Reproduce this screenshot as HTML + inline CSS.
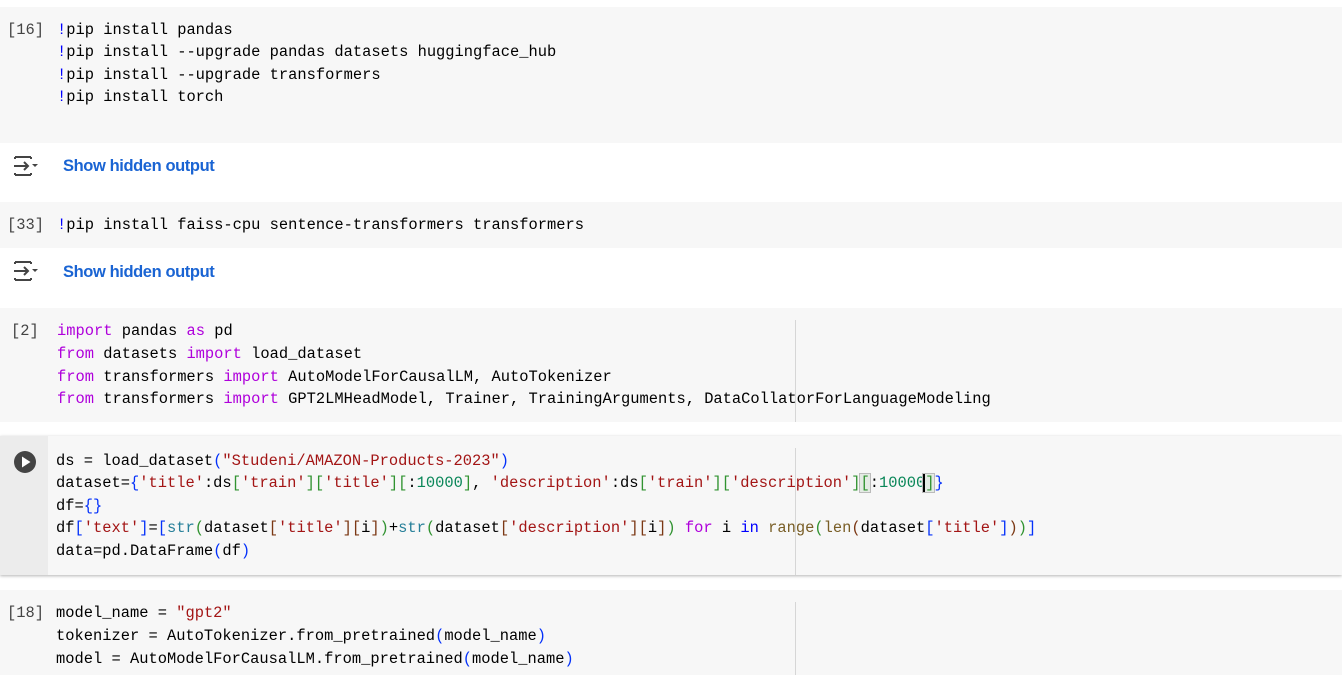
<!DOCTYPE html>
<html><head><meta charset="utf-8"><style>
body{margin:0;width:1342px;height:675px;background:#fff;position:relative;overflow:hidden;font-family:"Liberation Mono",monospace;font-size:15.42px;color:#000}
.cell{position:absolute;left:0;width:1342px;background:#f7f7f7}
.ln{position:absolute;white-space:pre;line-height:22px}
.lab{position:absolute;color:#444;white-space:pre;line-height:22px}
.k{color:#af00db}.b{color:#0000ff}.s{color:#a31515}.n{color:#098658}.f{color:#267f99}.bl{color:#0431fa}.g{color:#319331}.y{color:#7b3814}.e{color:#0000ff}.fn{color:#795e26}
.out{position:absolute;left:63px;font-family:"Liberation Sans",sans-serif;font-size:16.5px;color:#1a64d3;font-weight:bold;letter-spacing:-0.4px}
.ruler{position:absolute;left:795px;width:1px;background:#d6d6d6}
</style></head><body>
<div class="cell" style="top:7px;height:136px"></div>
<div class="lab" style="left:7px;top:19px">[16]</div>
<div class="ln" style="left:57px;top:19px"><span class="e">!</span>pip install pandas</div>
<div class="ln" style="left:57px;top:41px"><span class="e">!</span>pip install --upgrade pandas datasets huggingface_hub</div>
<div class="ln" style="left:57px;top:64px"><span class="e">!</span>pip install --upgrade transformers</div>
<div class="ln" style="left:57px;top:86px"><span class="e">!</span>pip install torch</div>

<svg style="position:absolute;left:13px;top:155px" width="26" height="22" viewBox="0 0 26 22" fill="none" stroke="#444" stroke-width="2"><path d="M2 2h16M2 20h16M2 2v2M2 18v2M18 2v2M18 18v2M1 11h14M11 7l4 4-4 4"/><path d="M19 9h6l-3 3z" fill="#444" stroke="none"/></svg>
<div class="out" style="top:157px">Show hidden output</div>

<div class="cell" style="top:202px;height:46px"></div>
<div class="lab" style="left:7px;top:214px">[33]</div>
<div class="ln" style="left:57px;top:214px"><span class="e">!</span>pip install faiss-cpu sentence-transformers transformers</div>
<svg style="position:absolute;left:13px;top:260px" width="26" height="22" viewBox="0 0 26 22" fill="none" stroke="#444" stroke-width="2"><path d="M2 2h16M2 20h16M2 2v2M2 18v2M18 2v2M18 18v2M1 11h14M11 7l4 4-4 4"/><path d="M19 9h6l-3 3z" fill="#444" stroke="none"/></svg>
<div class="out" style="top:263px">Show hidden output</div>

<div class="cell" style="top:308px;height:114px"></div>
<div class="ruler" style="top:320px;height:102px"></div>
<div class="lab" style="left:11px;top:320px">[2]</div>
<div class="ln" style="left:57px;top:320px"><span class="k">import</span> pandas <span class="k">as</span> pd</div>
<div class="ln" style="left:57px;top:343px"><span class="k">from</span> datasets <span class="k">import</span> load_dataset</div>
<div class="ln" style="left:57px;top:366px"><span class="k">from</span> transformers <span class="k">import</span> AutoModelForCausalLM, AutoTokenizer</div>
<div class="ln" style="left:57px;top:388px"><span class="k">from</span> transformers <span class="k">import</span> GPT2LMHeadModel, Trainer, TrainingArguments, DataCollatorForLanguageModeling</div>

<div class="cell" style="top:436px;height:139px;box-shadow:0 1px 3px rgba(0,0,0,.3)"></div>
<div style="position:absolute;left:0;top:436px;width:48px;height:139px;background:#ececec"></div>
<div class="ruler" style="top:448px;height:127px"></div>
<svg style="position:absolute;left:13px;top:450px" width="24" height="24"><circle cx="12" cy="12" r="11" fill="#444"/><path d="M9 6.5v11l8.5-5.5z" fill="#fff"/></svg>
<div class="ln" style="left:56px;top:450px">ds = load_dataset<span class="bl">(</span><span class="s">"Studeni/AMAZON-Products-2023"</span><span class="bl">)</span></div>
<div class="ln" style="left:56px;top:472px">dataset=<span class="bl">{</span><span class="s">'title'</span>:ds<span class="g">[</span><span class="s">'train'</span><span class="g">][</span><span class="s">'title'</span><span class="g">][</span>:<span class="n">10000</span><span class="g">]</span>, <span class="s">'description'</span>:ds<span class="g">[</span><span class="s">'train'</span><span class="g">][</span><span class="s">'description'</span><span class="g">]</span><span class="g" style="outline:1px solid #bbb;background:#e4ebe4">[</span>:<span class="n">10000</span><span class="g" style="outline:1px solid #bbb;background:#e4ebe4;border-left:2px solid #000;margin-left:-2px">]</span><span class="bl">}</span></div>
<div class="ln" style="left:56px;top:495px">df=<span class="bl">{}</span></div>
<div class="ln" style="left:56px;top:517px">df<span class="bl">[</span><span class="s">'text'</span><span class="bl">]</span>=<span class="bl">[</span><span class="f">str</span><span class="g">(</span>dataset<span class="y">[</span><span class="s">'title'</span><span class="y">][</span>i<span class="y">]</span><span class="g">)</span>+<span class="f">str</span><span class="g">(</span>dataset<span class="y">[</span><span class="s">'description'</span><span class="y">][</span>i<span class="y">]</span><span class="g">)</span> <span class="k">for</span> i <span class="b">in</span> <span class="fn">range</span><span class="g">(</span><span class="fn">len</span><span class="y">(</span>dataset<span class="bl">[</span><span class="s">'title'</span><span class="bl">]</span><span class="y">)</span><span class="g">)</span><span class="bl">]</span></div>
<div class="ln" style="left:56px;top:540px">data=pd.DataFrame<span class="bl">(</span>df<span class="bl">)</span></div>

<div class="cell" style="top:590px;height:85px"></div>
<div class="ruler" style="top:602px;height:73px"></div>
<div class="lab" style="left:7px;top:602px">[18]</div>
<div class="ln" style="left:56px;top:602px">model_name = <span class="s">"gpt2"</span></div>
<div class="ln" style="left:56px;top:625px">tokenizer = AutoTokenizer.from_pretrained<span class="bl">(</span>model_name<span class="bl">)</span></div>
<div class="ln" style="left:56px;top:648px">model = AutoModelForCausalLM.from_pretrained<span class="bl">(</span>model_name<span class="bl">)</span></div>
</body></html>
